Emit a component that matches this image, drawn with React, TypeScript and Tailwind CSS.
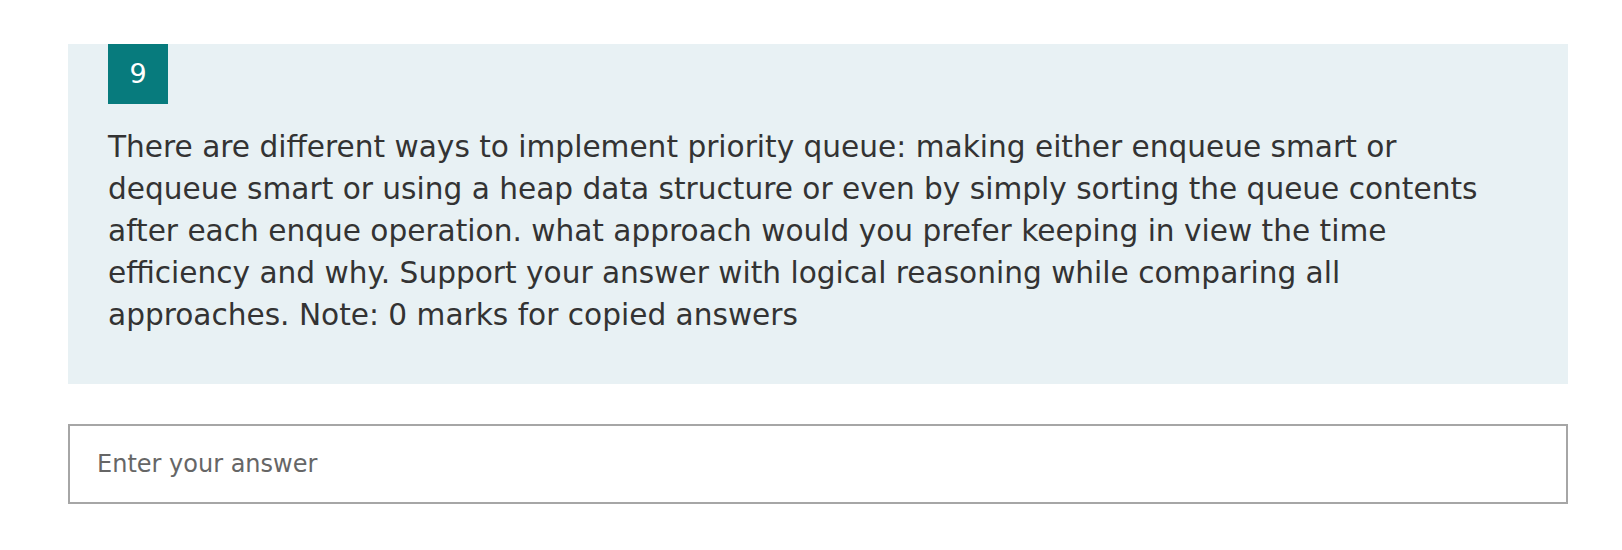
import React from "react";

export default function App() {
  return (
    <div className="min-h-[550px] bg-white pt-[44px]" style={{ fontFamily: '"DejaVu Sans", "Liberation Sans", sans-serif' }}>
      <div className="ml-[68px] w-[1500px]">
        <div className="bg-[#e8f1f4] px-[40px] pb-[48px]">
          <div className="flex h-[60px] w-[60px] items-center justify-center bg-[#077b7d] text-[27px] text-white">9</div>
          <p className="mt-[22px] text-[29.6px] leading-[42px] text-[#333333]">
            There are different ways to implement priority queue: making either enqueue smart or dequeue smart or using a heap data structure or even by simply sorting the queue contents after each enque operation. what approach would you prefer keeping in view the time efficiency and why. Support your answer with logical reasoning while comparing all approaches. Note: 0 marks for copied answers
          </p>
        </div>
        <div className="mt-[40px]">
          <input
            type="text"
            placeholder="Enter your answer"
            className="block h-[80px] w-full border-2 border-[#a6a6a6] bg-white px-[27px] text-[24px] text-[#333333] outline-none placeholder:text-[#666666]"
            style={{ fontFamily: '"DejaVu Sans", "Liberation Sans", sans-serif' }}
          />
        </div>
      </div>
    </div>
  );
}
